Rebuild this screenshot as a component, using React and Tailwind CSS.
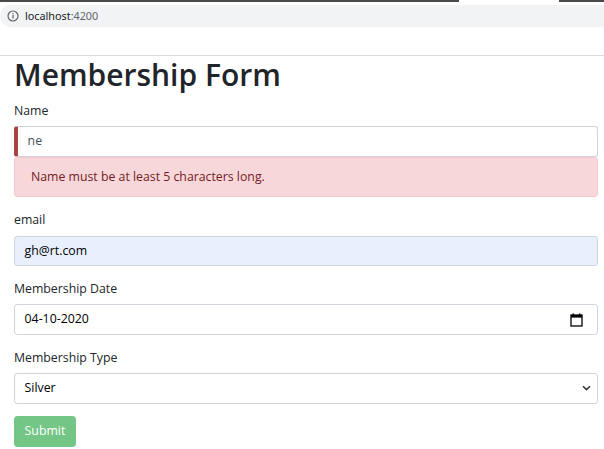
import { useState } from 'react'

function InfoIcon() {
  return (
    <svg width="12" height="12" viewBox="0 0 12 12" fill="none">
      <circle cx="6" cy="6" r="5" stroke="#5f6368" strokeWidth="1.2" />
      <rect x="5.4" y="5" width="1.2" height="3.6" fill="#5f6368" />
      <rect x="5.4" y="3.1" width="1.2" height="1.2" fill="#5f6368" />
    </svg>
  )
}

function CalendarIcon() {
  return (
    <svg width="13" height="14" viewBox="0 0 13 14" fill="none">
      <rect x="2.5" y="0.5" width="1.5" height="2" fill="#000" />
      <rect x="9" y="0.5" width="1.5" height="2" fill="#000" />
      <rect x="1" y="2" width="11" height="11" stroke="#000" strokeWidth="1.3" />
      <rect x="1" y="2" width="11" height="2.6" fill="#000" />
    </svg>
  )
}

function Chevron() {
  return (
    <svg width="9" height="6" viewBox="0 0 9 6" fill="none">
      <path d="M1 1.2 L4.5 4.6 L8 1.2" stroke="#333" strokeWidth="1.5" />
    </svg>
  )
}

const label = 'block text-[12.3px] leading-[19.2px] mb-[6.4px] text-[#212529]'
const control =
  'h-[30.4px] w-full flex items-center rounded-[3.2px] border border-[#ced4da] px-[9.6px] text-[12.3px] text-[#495057]'

export default function App() {
  const [name] = useState('ne')

  return (
    <div className="w-[604px] h-[449px] overflow-hidden bg-white font-['Open_Sans',sans-serif]">
      <div className="h-[56px] border-b border-[#dadce0]">
        <div className="flex h-[2px]">
          <div className="w-[459px] bg-[#4a4a4a]" />
          <div className="w-[100px]" />
          <div className="flex-1 bg-[#4a4a4a]" />
        </div>
        <div className="mt-[3px] h-[22px] rounded-l-[11px] bg-[#f1f3f4] flex items-center pl-[7px] gap-[6px]">
          <InfoIcon />
          <span className="text-[10.8px] text-[#202124] font-['Noto_Sans',sans-serif]">
            localhost<span className="text-[#5f6368]">:4200</span>
          </span>
        </div>
      </div>

      <div className="pl-[14px] pr-[6px]">
        <h1 className="text-[30px] leading-[38.4px] font-semibold text-[#212529] mb-[6.4px]">Membership Form</h1>

        <div className="mb-[12.8px]">
          <label className={label}>Name</label>
          <div className="h-[30.4px] w-full flex items-center rounded-[3.2px] border border-[#ced4da] border-l-[4px] border-l-[#a94442] pl-[9.6px] text-[12.3px] text-[#495057]">
            {name}
          </div>
          <div className="rounded-[3.2px] border border-[#f5c6cb] bg-[#f8d7da] px-[16px] py-[9.6px] text-[12.3px] leading-[19.2px] text-[#721c24]">
            Name must be at least 5 characters long.
          </div>
        </div>

        <div className="mb-[12.8px]">
          <label className={label}>email</label>
          <div className={`${control} bg-[#e8f0fe] text-black`}>gh@rt.com</div>
        </div>

        <div className="mb-[12.8px]">
          <label className={label}>Membership Date</label>
          <div className={`${control} justify-between text-black`}>
            <span>04-10-2020</span>
            <span className="mr-[4px] flex"><CalendarIcon /></span>
          </div>
        </div>

        <div className="mb-[12.8px]">
          <label className={label}>Membership Type</label>
          <div className={`${control} justify-between text-black`}>
            <span>Silver</span>
            <span className="-mr-[4px] flex"><Chevron /></span>
          </div>
        </div>

        <button
          disabled
          className="h-[30.4px] px-[9.6px] rounded-[3.2px] bg-[#73c686] text-white text-[12.3px] border border-[#73c686]"
        >
          Submit
        </button>
      </div>
    </div>
  )
}
